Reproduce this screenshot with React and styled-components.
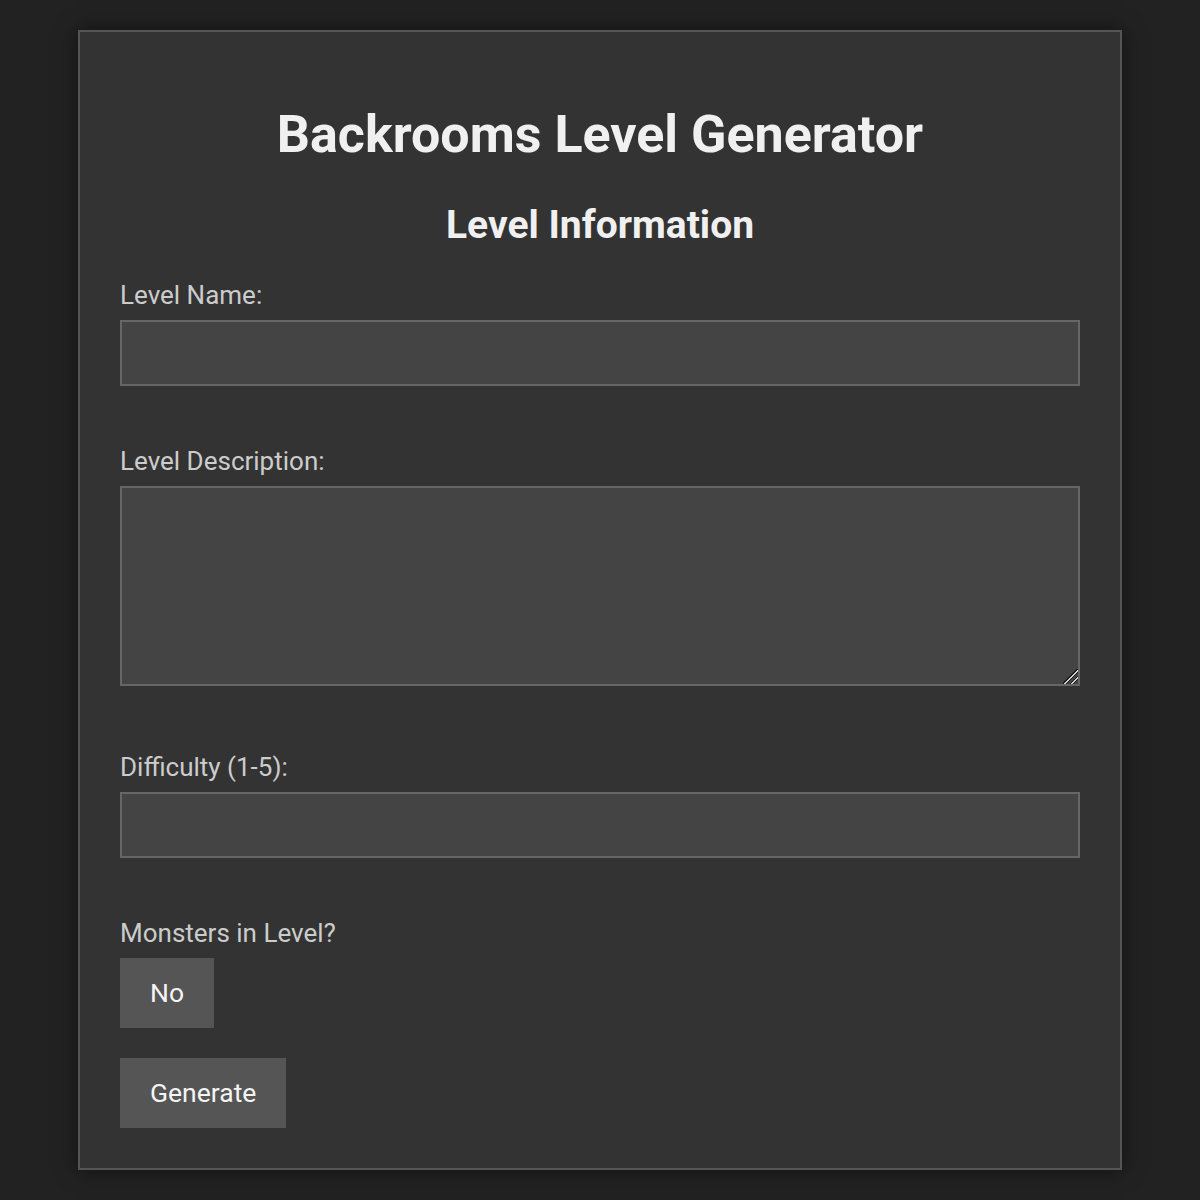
import React, { useState } from "react";
import styled, { createGlobalStyle } from "styled-components";

const GlobalStyle = createGlobalStyle`
  html, body {
    margin: 0;
    padding: 0;
    background: #222222;
  }
  body {
    font-family: Roboto, "Noto Sans", sans-serif;
    color: #eeeeee;
  }
`;

const Page = styled.div`
  padding: 30px 78px;
  min-height: 1200px;
  box-sizing: border-box;
`;

const Card = styled.form`
  background: #333333;
  border: 2px solid #555555;
  box-shadow: 0 0 20px rgba(0, 0, 0, 0.5);
  padding: 72px 40px 40px;
  display: flex;
  flex-direction: column;
`;

const Title = styled.h1`
  margin: 0;
  font-size: 52px;
  font-weight: 700;
  line-height: 61px;
  text-align: center;
  color: #f0f0f0;
`;

const Subtitle = styled.h2`
  margin: 37px 0 0;
  font-size: 39px;
  font-weight: 700;
  line-height: 46px;
  text-align: center;
  color: #f0f0f0;
`;

const Field = styled.div`
  display: flex;
  flex-direction: column;
  margin-top: ${(p) => p.$gap || 60}px;
`;

const Label = styled.label`
  font-size: 26px;
  line-height: 30px;
  color: #cccccc;
  margin-bottom: 10px;
`;

const Input = styled.input`
  box-sizing: border-box;
  width: 100%;
  height: 66px;
  background: #444444;
  border: 2px solid #666666;
  color: #eeeeee;
  font-family: inherit;
  font-size: 24px;
  padding: 0 16px;
  outline: none;
`;

const TextArea = styled.textarea`
  box-sizing: border-box;
  display: block;
  width: 100%;
  height: 200px;
  background: #444444;
  border: 2px solid #666666;
  color: #eeeeee;
  font-family: inherit;
  font-size: 24px;
  padding: 12px 16px;
  outline: none;
  resize: vertical;

  &::-webkit-resizer {
    background: linear-gradient(
      135deg,
      transparent 46%,
      #1a1a1a 46%,
      #1a1a1a 50%,
      #d0d0d0 50%,
      #d0d0d0 58%,
      #1a1a1a 58%,
      #1a1a1a 62%,
      transparent 62%,
      transparent 70%,
      #1a1a1a 70%,
      #1a1a1a 74%,
      #d0d0d0 74%,
      #d0d0d0 82%,
      #1a1a1a 82%,
      #1a1a1a 86%,
      transparent 86%
    );
  }
`;

const Button = styled.button`
  align-self: flex-start;
  background: #555555;
  color: #f4f4f4;
  border: none;
  font-family: inherit;
  font-size: 26.5px;
  line-height: 30px;
  padding: 20px 30px;
  margin-top: ${(p) => p.$gap || 0}px;
  cursor: pointer;
`;

export default function App() {
  const [monsters, setMonsters] = useState(false);

  return (
    <>
      <GlobalStyle />
      <Page>
        <Card onSubmit={(e) => e.preventDefault()}>
          <Title>Backrooms Level Generator</Title>
          <Subtitle>Level Information</Subtitle>

          <Field $gap={32}>
            <Label htmlFor="name">Level Name:</Label>
            <Input id="name" type="text" />
          </Field>

          <Field $gap={60}>
            <Label htmlFor="desc">Level Description:</Label>
            <TextArea id="desc" />
          </Field>

          <Field $gap={66}>
            <Label htmlFor="diff">Difficulty (1-5):</Label>
            <Input id="diff" type="text" />
          </Field>

          <Field $gap={60}>
            <Label>Monsters in Level?</Label>
            <Button type="button" onClick={() => setMonsters(!monsters)}>
              {monsters ? "Yes" : "No"}
            </Button>
          </Field>

          <Button type="submit" $gap={30}>
            Generate
          </Button>
        </Card>
      </Page>
    </>
  );
}
